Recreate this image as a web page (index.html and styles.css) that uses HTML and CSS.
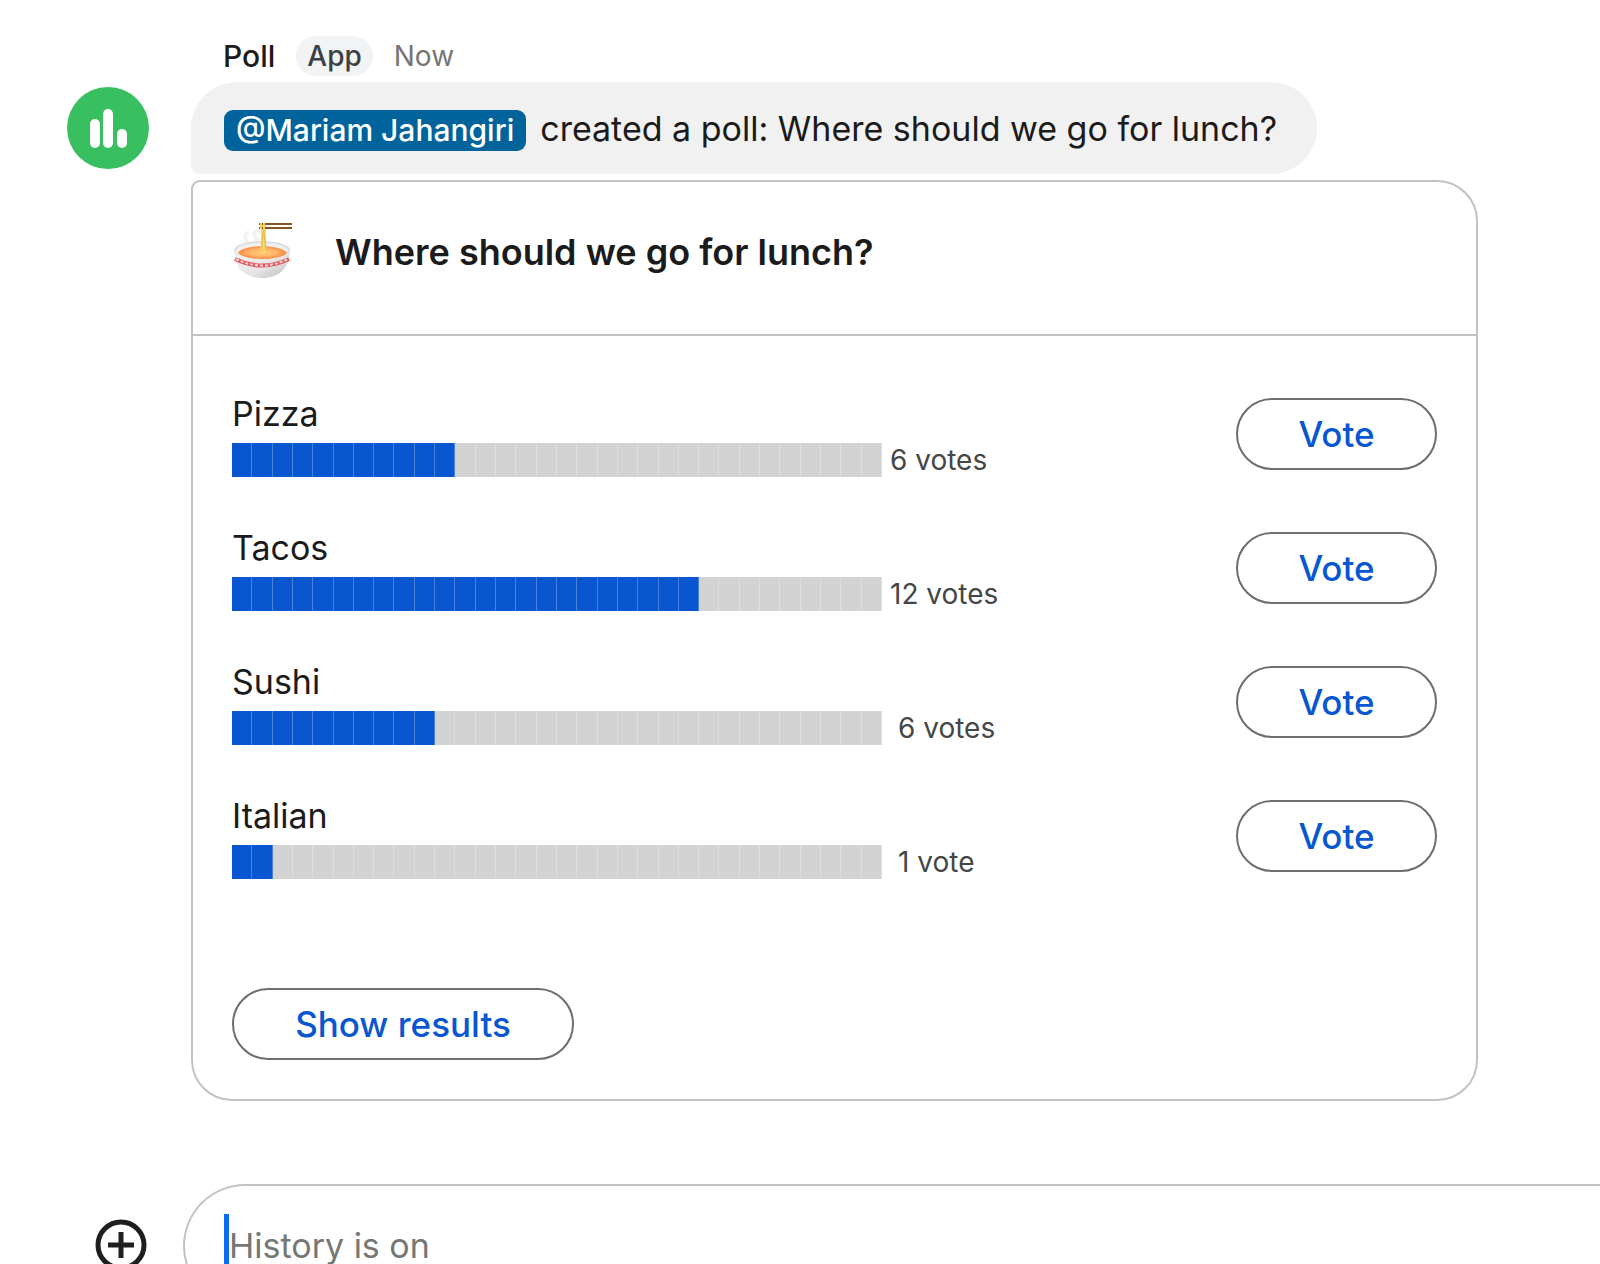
FILE: index.html
```html
<!DOCTYPE html>
<html lang="en">
<head>
<meta charset="utf-8">
<meta name="viewport" content="width=device-width, initial-scale=1">
<title>Poll</title>
<link rel="stylesheet" href="styles.css">
</head>
<body>
<main class="chat">
  <article class="message">
    <svg class="avatar" viewBox="0 0 82 82" role="img" aria-label="Poll">
      <circle cx="41" cy="41" r="41" fill="#38bf60"/>
      <rect x="23" y="32" width="10" height="29" rx="5" fill="#fff"/>
      <rect x="36" y="22" width="10" height="39" rx="5" fill="#fff"/>
      <rect x="50" y="42" width="10" height="19" rx="5" fill="#fff"/>
    </svg>
    <div class="content">
      <header class="meta">
        <span class="sender">Poll</span>
        <span class="badge">App</span>
        <span class="time">Now</span>
      </header>
      <p class="bubble"><a class="mention" href="#mariam">@Mariam Jahangiri</a><span>created a poll: Where should we go for lunch?</span></p>
      <section class="card">
        <div class="card-head">
          <svg class="noodles" viewBox="0 0 60 60" aria-hidden="true">
            <defs>
              <linearGradient id="bowl" x1="0" y1="0" x2="1" y2="1">
                <stop offset="0" stop-color="#f4f4f4"/><stop offset=".6" stop-color="#e4e4e5"/><stop offset="1" stop-color="#b9babd"/>
              </linearGradient>
              <radialGradient id="soup">
                <stop offset="0" stop-color="#ffd08a"/><stop offset=".6" stop-color="#ffb067"/><stop offset="1" stop-color="#f98a3e"/>
              </radialGradient>
            </defs>
            <g transform="translate(1 0)">
            <path d="M14 21q-4-5 0-9M25 20c-5-4-4-10 0-10s6 5 4 10" fill="none" stroke="#f3f3f4" stroke-width="4" stroke-linecap="round"/>
            <path d="M1 29c0 17 10 28 28 28s28-11 28-28z" fill="url(#bowl)"/>
            <ellipse cx="29" cy="29" rx="28" ry="9" fill="#dcdfe1"/>
            <ellipse cx="29" cy="30" rx="26" ry="8" fill="#f1f1f1"/>
            <path d="M5 32c4-9 44-9 49 0-8 8-41 8-49 0z" fill="url(#soup)"/>
            <path d="M2 38q27 13 54 0" fill="none" stroke="#e5575c" stroke-width="4"/>
            <path d="M3 38q26 13 52 0" fill="none" stroke="#f6dcdc" stroke-width="2" stroke-dasharray="3 2"/>
            <path d="M18 34q6-4 11-1t10 0M22 31q7-3 14 0" fill="none" stroke="#f7c463" stroke-width="1"/>
            <path d="M28 3c1 8-1 18 0 29h5c1-11-1-21 0-29z" fill="#f7dc73"/>
            <path d="M29 5c3 9-2 17 1 26M32 5c-3 8 2 17 0 25" fill="none" stroke="#e3b53c" stroke-width="1"/>
            <path d="M26 3h33M26 7h33" stroke="#895420" stroke-width="2"/>
            <path d="M28 2v6M31 2v6" stroke="#f7d45d" stroke-width="2"/>
            </g>
          </svg>
          <h1 class="title">Where should we go for lunch?</h1>
        </div>
        <div class="card-body">
          <ul class="options">
            <li class="option">
              <div class="choice"><span class="name">Pizza</span>
                <div class="result"><div class="bar"><div class="fill" style="width:34.375%"></div></div><span class="count">6 votes</span></div>
              </div>
              <button class="btn" type="button" aria-label="Vote for Pizza">Vote</button>
            </li>
            <li class="option">
              <div class="choice"><span class="name">Tacos</span>
                <div class="result"><div class="bar"><div class="fill" style="width:71.875%"></div></div><span class="count">12 votes</span></div>
              </div>
              <button class="btn" type="button" aria-label="Vote for Tacos">Vote</button>
            </li>
            <li class="option">
              <div class="choice"><span class="name">Sushi</span>
                <div class="result wide"><div class="bar"><div class="fill" style="width:31.25%"></div></div><span class="count">6 votes</span></div>
              </div>
              <button class="btn" type="button" aria-label="Vote for Sushi">Vote</button>
            </li>
            <li class="option">
              <div class="choice"><span class="name">Italian</span>
                <div class="result wide"><div class="bar"><div class="fill" style="width:6.25%"></div></div><span class="count">1 vote</span></div>
              </div>
              <button class="btn" type="button" aria-label="Vote for Italian">Vote</button>
            </li>
          </ul>
          <button class="btn results" type="button">Show results</button>
        </div>
      </section>
    </div>
  </article>
  <form class="composer">
    <button class="add" type="button" aria-label="Add">
      <svg viewBox="0 0 52 52" aria-hidden="true"><circle cx="26" cy="26" r="23" fill="none" stroke="#1f1f1f" stroke-width="5"/><path d="M26 13v26M13 26h26" stroke="#1f1f1f" stroke-width="5"/></svg>
    </button>
    <div class="field">
      <span class="caret"></span>
      <input class="input" type="text" placeholder="History is on" aria-label="Message">
    </div>
  </form>
</main>
</body>
</html>
```
FILE: styles.css
```css
* { box-sizing: border-box; }
body {
  margin: 0;
  height: 100vh;
  overflow: hidden;
  background: #fff;
  color: #1b1b1b;
  font-family: Inter, Roboto, sans-serif;
  font-size: 36px;
}
.chat { padding-top: 35px; }
.message {
  display: flex;
  gap: 42px;
  padding: 0 122px 0 67px;
}
.avatar { flex: none; width: 82px; height: 82px; margin-top: 52px; }
.content { flex: 1; min-width: 0; }
.meta {
  display: flex;
  align-items: center;
  height: 42px;
  padding-left: 32px;
  font-size: 30px;
  line-height: 40px;
}
.sender { font-weight: 500; }
.badge {
  margin: 0 21px;
  padding: 0 11px;
  border-radius: 21px;
  background: #f1f3f4;
  color: #3c4043;
  font-size: 28px;
  font-weight: 500;
}
.time { color: #757575; font-size: 28px; }
.bubble {
  display: flex;
  align-items: center;
  gap: 14px;
  width: fit-content;
  height: 92px;
  margin: 5px 0 6px;
  padding: 0 40px 0 33px;
  border-radius: 46px 46px 46px 9px;
  background: #f1f1f1;
  font-size: 34px;
  white-space: nowrap;
}
.mention {
  height: 41px;
  margin-top: 4px;
  padding: 0 12px;
  border-radius: 9px;
  background: #00639b;
  color: #fff;
  font-size: 30px;
  font-weight: 500;
  line-height: 41px;
  text-decoration: none;
}
.card {
  border: 2px solid #c0c3c1;
  border-radius: 9px 41px 41px 41px;
}
.card-head {
  display: flex;
  gap: 43px;
  height: 154px;
  padding: 39px;
  border-bottom: 2px solid #c0c3c1;
}
.noodles { flex: none; width: 60px; height: 60px; }
.title { margin: 0; font-size: 36px; font-weight: 600; line-height: 62px; }
.card-body { padding: 62px 39px 39px; }
.options {
  display: grid;
  gap: 54px;
  margin: 0 0 108px;
  padding: 0;
  list-style: none;
}
.option { display: flex; align-items: flex-start; justify-content: space-between; height: 80px; }
.name { display: block; height: 45px; line-height: 32px; font-size: 34px; }
.result { display: flex; align-items: center; gap: 8px; height: 34px; }
.wide { gap: 16px; }
.bar { position: relative; width: 650px; height: 34px; background: #d3d3d3; }
.bar::after {
  content: "";
  position: absolute;
  inset: 0;
  background: repeating-linear-gradient(90deg, transparent 0 calc(100% / 32 - 1px), #ffffff40 calc(100% / 32 - 1px) calc(100% / 32));
}
.fill { height: 100%; background: #0957d0; }
.count { color: #444746; font-size: 28px; }
.btn {
  width: 201px;
  height: 72px;
  padding: 0;
  border: 2px solid #6c6e6d;
  border-radius: 36px;
  background: #fff;
  color: #0957d0;
  font: 500 35px Inter, Roboto, sans-serif;
}
.results { display: block; width: 342px; }
.composer { display: flex; align-items: flex-start; margin-top: 83px; padding-left: 95px; }
.add { flex: none; width: 52px; height: 52px; margin: 35px 36px 0 0; padding: 0; border: 0; background: none; }
.add svg { display: block; width: 52px; height: 52px; }
.field {
  display: flex;
  flex: 1;
  height: 124px;
  padding: 28px 0 0 39px;
  border: 2px solid #c0c3c1;
  border-right: 0;
  border-radius: 62px 0 0 62px;
}
.caret { width: 5px; height: 62px; background: #0b6bf2; }
.input { flex: 1; height: 62px; padding: 0; border: 0; outline: 0; background: none; font: 34px Inter, Roboto, sans-serif; }
.input::placeholder { color: #757775; opacity: 1; }
```
